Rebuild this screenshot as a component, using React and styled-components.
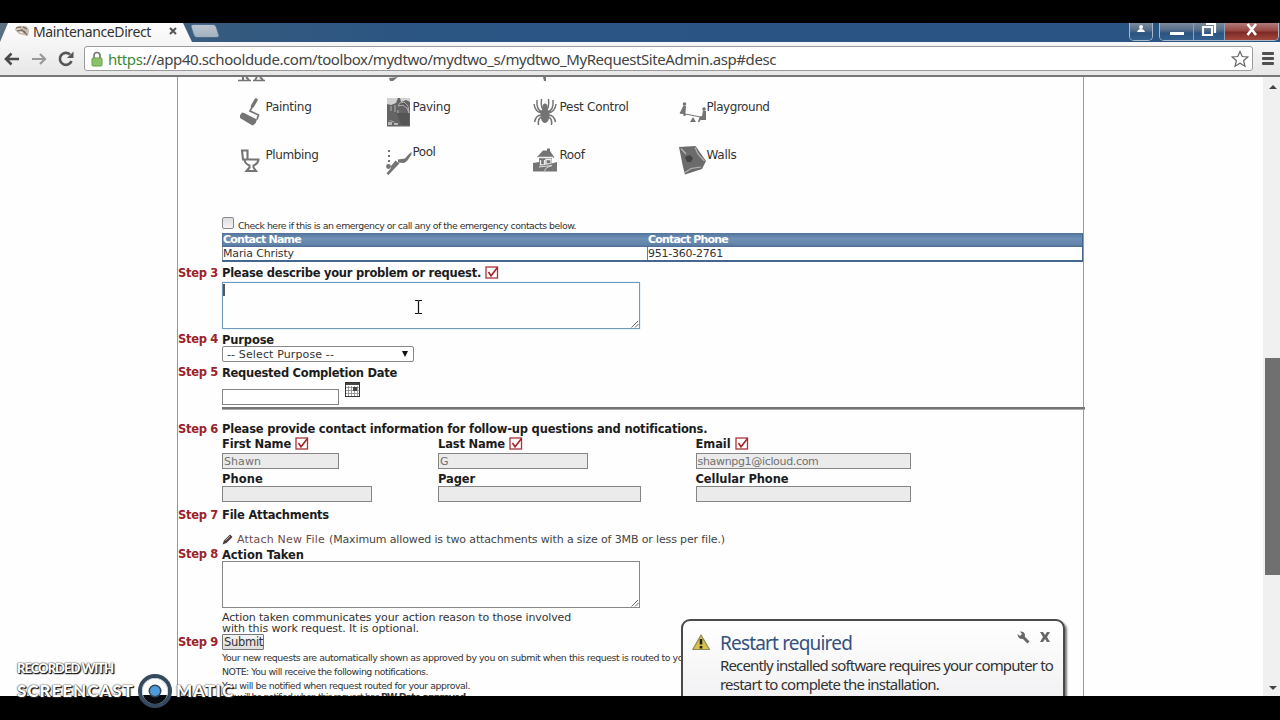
import React, { useLayoutEffect, useRef, useState } from "react";
import styled, { createGlobalStyle } from "styled-components";

const verdana = '"DejaVu Sans", sans-serif';
const segoe = '"Noto Sans", "Open Sans", sans-serif';

const GlobalStyle = createGlobalStyle`
  * { box-sizing: border-box; }
  body { margin: 0; background: #000; overflow: hidden; }
`;

/* ---------- text that is tracked to a given measure ---------- */

const Tracked = styled.span`
  display: inline-block;
  justify-self: start;
  white-space: pre;
`;

function Fit({ w, children }) {
  const ref = useRef(null);
  const [spacing, setSpacing] = useState(0);
  useLayoutEffect(() => {
    const natural = ref.current.getBoundingClientRect().width;
    setSpacing((w - natural) / ref.current.textContent.length);
  }, [w]);
  return (
    <Tracked ref={ref} style={{ letterSpacing: `${spacing}px` }}>
      {children}
    </Tracked>
  );
}

/* ---------- window ---------- */

const Screen = styled.div`
  position: relative;
  width: 1280px;
  height: 720px;
  padding: 23px 0 24px;
  background: #000;
  overflow: hidden;
`;

const Browser = styled.div`
  position: relative;
  display: flex;
  flex-direction: column;
  height: 673px;
  background: #fefefe;
  overflow: hidden;
`;

const TabStrip = styled.div`
  display: flex;
  justify-content: space-between;
  height: 19px;
  background: linear-gradient(90deg, #5c6f82 0, #33597f 240px, #2b5583 420px, #2a5484 100%);
`;

const TabGroup = styled.div`
  display: flex;
`;

const Tab = styled.div`
  display: flex;
  align-items: center;
  width: 192px;
  height: 19px;
  padding: 0 15px 3px 14px;
  background: linear-gradient(#fdfdfd, #f6f6f6);
  clip-path: polygon(8px 0, 183px 0, 192px 100%, 0 100%);
  font: 14px/17px ${segoe};
  color: #333;
`;

const TabTitle = styled.div`
  flex: 1;
  padding-left: 3px;
`;

const NewTab = styled.div`
  width: 24px;
  height: 12px;
  margin: 2px 0 0 1px;
  border-radius: 2px;
  background: linear-gradient(#b9c4cf, #a3b1c0);
  transform: skewX(18deg);
  box-shadow: 0 0 1px #dfe6ee;
`;

const WindowControls = styled.div`
  display: flex;
  height: 18px;
  padding-right: 1px;
`;

const ControlGroup = styled.div`
  display: flex;
  height: 18px;
  margin-left: 6px;
  border: 1px solid #a9bacb;
  border-top: 0;
  border-radius: 0 0 5px 5px;
  overflow: hidden;
`;

const Control = styled.div`
  display: flex;
  justify-content: center;
  align-items: flex-start;
  width: ${(p) => p.$w}px;
  background: ${(p) =>
    p.$close
      ? "linear-gradient(#b07d7a, #9a4742 45%, #7c2a27 55%, #a4483c)"
      : "linear-gradient(#7c8b9a, #566f89 40%, #2c5480 60%, #34608d)"};
  & + & { border-left: 1px solid #8da2b8; }
`;

const Toolbar = styled.div`
  display: flex;
  align-items: center;
  height: 35px;
  padding: 0 5px 0 3px;
  border-bottom: 2px solid #777;
  background: linear-gradient(#f7f7f7, #e6e6e6);
`;

const NavIcons = styled.div`
  display: flex;
  width: 81px;
`;

const AddressBar = styled.div`
  display: flex;
  align-items: center;
  width: 1169px;
  height: 25px;
  padding: 0 3px 0 6px;
  border: 1px solid #9b9b9b;
  border-radius: 3px;
  background: #fff;
`;

const Url = styled.div`
  flex: 1;
  padding-left: 5px;
  font: 15px/22px ${segoe};
  color: #444;
`;

const Scheme = styled.span`
  color: #3d8a35;
`;

const MenuIcon = styled.div`
  display: flex;
  flex-direction: column;
  gap: 2px;
  margin-left: 9px;
`;

const MenuLine = styled.div`
  width: 12px;
  height: 3px;
  border-radius: 1px;
  background: #505050;
`;

/* ---------- page ---------- */

const Viewport = styled.div`
  display: flex;
  flex: 1;
  min-height: 0;
`;

const PageArea = styled.div`
  flex: 1;
  padding-left: 177px;
  background: #fefefe;
`;

const Sheet = styled.div`
  width: 907px;
  height: 619px;
  border: solid #999;
  border-width: 0 1px;
`;

const Scrollbar = styled.div`
  display: flex;
  flex-direction: column;
  align-items: center;
  width: 17px;
  padding: 8px 0 6px;
  background: #f0f0f0;
`;

const Arrow = styled.div`
  width: 0;
  height: 0;
  margin-left: 2px;
  border: solid transparent;
  border-width: ${(p) => (p.$down ? "4px 4px 0" : "0 4px 4px")};
  border-top-color: ${(p) => (p.$down ? "#444" : "transparent")};
  border-bottom-color: ${(p) => (p.$down ? "transparent" : "#444")};
`;

const Track = styled.div`
  flex: 1;
  width: 100%;
  padding: 269px 0 0 2px;
`;

const Thumb = styled.div`
  height: 217px;
  background: #707070;
`;

const Categories = styled.div`
  display: grid;
  grid-template-columns: 147px 147px 147px 147px;
  grid-template-rows: 7px 48px 48px;
  height: 138px;
  padding-left: 60px;
`;

const Category = styled.div`
  display: flex;
  height: ${(p) => (p.$cut ? 5 : 48)}px;
  overflow: ${(p) => (p.$cut ? "hidden" : "visible")};
`;

const CategoryIcon = styled.div`
  width: 27.500px;
  padding-top: 14px;
`;

const CategoryName = styled.div`
  padding-top: ${(p) => 15 - (p.$raise || 0)}px;
  font: 12px/16px ${verdana};
  color: #333;
`;

const Emergency = styled.div`
  display: flex;
  align-items: flex-start;
  height: 18px;
  padding: 2px 0 0 44px;
  font: 9.4px/18px ${verdana};
  color: #333;
`;

const Checkbox = styled.div`
  width: 12px;
  height: 12px;
  margin-right: 4px;
  border: 1px solid #888;
  border-radius: 2px;
  background: linear-gradient(#dedede, #f4f4f4);
`;

const ContactTable = styled.div`
  height: 29px;
  margin-left: 44px;
  border: solid #45668f;
  border-width: 0 1px 2px 0;
  font: 11px/13px ${verdana};
  color: #333;
`;

const ContactRow = styled.div`
  display: grid;
  grid-template-columns: 425px 1fr;
  height: ${(p) => (p.$head ? 14 : 13)}px;
  background: ${(p) => (p.$head ? "linear-gradient(#52749c, #6e90b4 40%, #6384ab 80%, #4c6c94)" : "#fff")};
  border-left: 1px solid ${(p) => (p.$head ? "#52749c" : "#999")};
  color: ${(p) => (p.$head ? "#fff" : "#333")};
  font-weight: ${(p) => (p.$head ? 700 : 400)};
`;

const PhoneCell = styled.div`
  margin-left: -1px;
  border-left: 1px solid ${(p) => (p.$plain ? "transparent" : "#777")};
`;

const Step = styled.section`
  display: grid;
  grid-template-columns: 44px 1fr;
  height: ${(p) => p.$h}px;
`;

const StepNo = styled.div`
  font: 700 11.5px/${(p) => p.$line}px ${verdana};
  color: #9b2329;
`;

const StepBody = styled.div`
  display: flex;
  flex-direction: column;
  align-items: flex-start;
  width: 863px;
`;

const Heading = styled.div`
  display: flex;
  align-items: center;
  height: ${(p) => p.$line}px;
  padding-top: ${({ $drop = 1 }) => Math.max($drop, 0) * 2}px;
  padding-bottom: ${({ $drop = 1 }) => Math.max(-$drop, 0) * 2}px;
  font: 700 11.5px/14px ${verdana};
  color: #1c1c1c;
  gap: 4px;
`;

const TextArea = styled.div`
  display: flex;
  justify-content: space-between;
  align-items: flex-end;
  width: 418px;
  height: 47px;
  padding: 1px 0 0 0;
  border: 1px solid ${(p) => (p.$focus ? "#7298bb" : "#888")};
  box-shadow: ${(p) => (p.$focus ? "0 0 1px #8cbbe6" : "none")};
  background: #fefeff;
`;

const Caret = styled.div`
  align-self: flex-start;
  width: 2px;
  height: 12px;
  background: #555;
`;

const Select = styled.div`
  display: flex;
  justify-content: space-between;
  align-items: center;
  width: 192px;
  height: 16px;
  padding: 1px 5px 0 4px;
  border: 1px solid #888;
  border-radius: 2px;
  background: #fff;
  font: 11px/14px ${verdana};
  color: #333;
`;

const DownMark = styled.div`
  width: 0;
  height: 0;
  margin-bottom: 2px;
  border: solid transparent;
  border-width: 6px 3px 0;
  border-top-color: #111;
`;

const DateRow = styled.div`
  display: flex;
  align-items: flex-start;
  gap: 6px;
  height: 27px;
  padding-top: 2px;
`;

const Field = styled.div`
  width: ${(p) => p.$w}px;
  height: 16px;
  margin-top: ${(p) => p.$top || 0}px;
  padding-left: 1px;
  border: 1px solid #858585;
  background: ${(p) => (p.$open ? "#fff" : "#ebebeb")};
  font: 11px/16px ${verdana};
  color: #707070;
`;

const Divider = styled.div`
  width: 863px;
  height: 3px;
  border-top: 2px solid #757575;
  border-bottom: 1px solid #aaa;
`;

const ContactGrid = styled.div`
  display: grid;
  grid-template-columns: 216px 257.5px 1fr;
  grid-template-rows: 32px 34px;
  padding-top: 1px;
`;

const AttachLine = styled.div`
  display: flex;
  align-items: center;
  height: 16px;
  margin-top: 8px;
  padding-top: 1px;
  gap: 4px;
  font: 11px/16px ${verdana};
  color: #444;
`;

const AttachLink = styled.span`
  color: #6d4a4a;
`;

const Help = styled.div`
  padding-top: 4px;
  font: 11px/11px ${verdana};
  color: #333;
`;

const Submit = styled.div`
  height: 16px;
  width: 42px;
  padding-left: 1px;
  border: 1px solid #777;
  border-radius: 1px;
  background: linear-gradient(#f4f4f4, #dcdcdc);
  font: 11.5px/15px ${verdana};
  color: #333;
`;

const Notes = styled.div`
  padding-top: 1px;
  font: 9.4px/14px ${verdana};
  color: #333;
`;

const LastNote = styled.div`
  margin-top: -2px;
  line-height: 12px;
`;

/* ---------- overlays ---------- */

const Toast = styled.div`
  position: absolute;
  left: 681px;
  top: 596px;
  display: grid;
  grid-template-columns: 28px 1fr auto;
  grid-template-rows: 25px auto;
  width: 384px;
  height: 90px;
  padding: 10px 12px 0 9px;
  border: 2px solid #4a4a4a;
  border-radius: 9px;
  background: linear-gradient(#fff, #f0f0f2);
  box-shadow: 2px 2px 2px rgba(0, 0, 0, 0.5);
  font: 15px/19px ${segoe};
  color: #333;
`;

const ToastTitle = styled.div`
  font: 19px/25px ${segoe};
  color: #35517f;
`;

const ToastText = styled.div`
  grid-column: 2 / 4;
  align-self: start;
`;

const ToastTools = styled.div`
  display: flex;
  gap: 9px;
`;

const PointerMark = styled.div`
  position: absolute;
  left: 414px;
  top: 276px;
  height: 16px;
`;

const Watermark = styled.div`
  position: absolute;
  left: 17px;
  top: 661px;
  font: 900 13px/15px Lato, sans-serif;
  color: #fff;
  text-shadow: 1px 1px 1px #222, 0 0 1px #333, 0 0 2px #555, 1px 1px 1px #111;
`;

const WatermarkRow = styled.div`
  display: flex;
  align-items: center;
  height: 34px;
  margin-top: -2px;
  gap: 4px;
  font-size: 17px;
  line-height: 34px;
`;

/* ---------- drawings ---------- */

const Svg = ({ w, h, children }) => (
  <svg width={w} height={h} viewBox={`0 0 ${w} ${h}`} fill="#747474" display="block">
    {children}
  </svg>
);

const Required = () => (
  <Svg w={15} h={13}>
    <rect x="1" y="1" width="11.5" height="11" fill="#fff" stroke="#a93338" strokeWidth="1.3" />
    <path d="M3.5 6 L6 9.8 L12.500 1.500" fill="none" stroke="#a3262b" strokeWidth="1.6" />
  </Svg>
);

const Grip = () => (
  <Svg w={8} h={8}>
    <path d="M0.5 7.5 L7 1 M4 7.5 L7.5 4" stroke="#666" fill="none" />
  </Svg>
);

const icons = {
  paint: (
    <Svg w={27} h={30}>
      <path d="M18 1.500 L12 13 L20.500 17 L19 21.500" fill="none" stroke="#747474" strokeWidth="1.700" />
      <path d="M18 2 L14.500 8" stroke="#747474" strokeWidth="3.400" strokeLinecap="round" />
      <path d="M4 14.500 Q1.500 17 2 20 L14.500 27.500 Q18 26 19 21.500 L6 15Z" />
    </Svg>
  ),
  plumb: (
    <Svg w={27} h={30}>
      <path d="M4 4.500 H9.500 V13.500 H5 Z M6.500 13.500 H20.500 Q20 18 15.500 19.500 V21.500 L18 25 H8.500 L11.500 21.500 V19.500 Q7 18 6.500 13.500" fill="none" stroke="#747474" strokeWidth="2.100" />
    </Svg>
  ),
  pave: (
    <Svg w={27} h={30}>
      <path d="M2 0h23v28.500H2z" fill="#646464" />
      <path d="M2 0h11l-2 5-5 2-4-1z M15 0h10v4l-4-2-5 2z" fill="#d2d2d2" />
      <path d="M13 8l2-3 4-1 4 4 1 7-2-5-4-3z M6 8v5M10 7v7M13 12v3" stroke="#bbb" strokeWidth=".9" fill="#555" />
      <path d="M3 24h4v3H3zM9 25h4v2H9zM3 22l5 1 2 2" fill="#b8b8b8" />
      <path d="M12 15h12v12H16z" fill="#555" />
    </Svg>
  ),
  pool: (
    <Svg w={27} h={32}>
      <path d="M3 4h2v2H3zM3 9h2v2H3zM3 14h2v2H3z" />
      <circle cx="3.500" cy="20.500" r="2.400" />
      <path d="M13 13.500 L20 12.500 L24 8 L26.500 6 V8.500 L22 15 L19 17 L13 16.500Z" />
      <path d="M6 20 L10.500 14.500 L14.500 17.500 L9.500 22.500 L3.500 29 L1.500 27.500 L6 22Z" />
    </Svg>
  ),
  spider: (
    <Svg w={27} h={30}>
      <ellipse cx="13" cy="17.500" rx="4.500" ry="7.500" />
      <ellipse cx="13" cy="9" rx="2.500" ry="3.500" />
      <path d="M11 14 Q4 13 5 2 M12 12 Q8.500 10 9.500 1 M15 14 Q22 13 21 2 M14 12 Q17.500 10 16.500 1 M10 15 Q3 14 2 6 M16 15 Q23 14 24 6 M11 17 Q4 16 2.500 24 M15 17 Q22 16 23.500 24 M10 19 Q5.500 20 6.500 27 M16 19 Q20.500 20 19.500 27" fill="none" stroke="#747474" strokeWidth="1.500" />
    </Svg>
  ),
  roof: (
    <Svg w={27} h={30}>
      <path d="M5 11 L11 4.500 H15 V2.500 H18 V5 L22.500 11.500 L20 12 V21 H7 V12Z" />
      <path d="M6 11.500 H21 M8.500 14 V19 H12.500 V14 M14 13.500 h5 v4.500 h-5z" fill="none" stroke="#eee" strokeWidth="1.300" />
      <path d="M1 17 L7 16 V20 L16 18.500 L25 16 V25.500 H1Z" />
      <path d="M7 21 L20 19.500 Q12 22 13 25" fill="none" stroke="#ddd" />
    </Svg>
  ),
  play: (
    <Svg w={27} h={30}>
      <circle cx="5.500" cy="6" r="1.800" />
      <circle cx="25" cy="11" r="1.800" />
      <path d="M4.500 7.500 L7 8 L6.500 15 V18 H4.500 V15.500 H0.500Z M24 12.500 L27 13 V22 H21.500 L20.500 24 H19 L20.500 19 L23 18Z M14 19 L17 24 H11Z" />
      <path d="M1 15 L27 20" stroke="#747474" strokeWidth="1" />
    </Svg>
  ),
  walls: (
    <Svg w={27} h={32}>
      <path d="M0 1 L16.500 0 L27 15 L23 23 L6 28.500 L4 21Z" fill="#6b6b6b" />
      <path d="M16 1.500 L19 8 L25.500 15 M6 26.500 L12 22.500 L22 21 M2 2.500 L7 8" fill="none" stroke="#b5b5b5" strokeWidth="1.200" />
      <path d="M6 11 L11 9 L14 12 L12 16 L8 16Z" fill="#454545" />
    </Svg>
  ),
};

const Cat = ({ icon, w, name, raise }) => (
  <Category>
    <CategoryIcon>{icons[icon]}</CategoryIcon>
    <CategoryName $raise={raise}>
      <Fit w={w}>{name}</Fit>
    </CategoryName>
  </Category>
);

const Labeled = ({ w, label, required, drop, line, children }) => (
  <div>
    <Heading $line={line} $drop={drop}>
      <Fit w={w}>{label}</Fit>
      {required && <Required />}
    </Heading>
    {children}
  </div>
);

export default function App() {
  return (
    <Screen>
      <GlobalStyle />
      <Browser>
        <TabStrip>
          <TabGroup>
            <Tab>
              <Svg w={16} h={14}>
                <path d="M1 6 Q2 1 8 2 Q14 1 15 7 L14 12 L9 11 L5 10Z" fill="#c9bbae" />
                <path d="M2 4 L7 3 M9 3 l4 2 M3 7 l5 -1 3 3 M10 7 l3 4" stroke="#77655b" strokeWidth="1.2" fill="none" />
                <path d="M3 5 l3 0 M6 8 l3 1" stroke="#eee" />
              </Svg>
              <TabTitle><Fit w={118}>MaintenanceDirect</Fit></TabTitle>
              <Svg w={8} h={8}><path d="M1 1 L7 7 M7 1 L1 7" stroke="#555" strokeWidth="2" /></Svg>
            </Tab>
            <NewTab />
          </TabGroup>
          <WindowControls>
            <ControlGroup>
              <Control $w={22}>
                <Svg w={12} h={12}><circle cx="6" cy="4" r="2" fill="#fff" /><path d="M2 9 Q3 6 6 6 Q9 6 10 9Z" fill="#fff" /></Svg>
              </Control>
            </ControlGroup>
            <ControlGroup>
              <Control $w={33}><Svg w={16} h={14}><rect x="1" y="9" width="14" height="3" fill="#fff" /></Svg></Control>
              <Control $w={31}>
                <Svg w={16} h={14}><path d="M2 4 H11 V12 H2Z M5 1 H14 V10" fill="none" stroke="#fff" strokeWidth="2.200" /></Svg>
              </Control>
              <Control $w={54} $close>
                <Svg w={14} h={14}><path d="M2.500 1 L11 12 M11 1 L2.500 12" stroke="#fff" strokeWidth="2.600" /></Svg>
              </Control>
            </ControlGroup>
          </WindowControls>
        </TabStrip>

        <Toolbar>
          <NavIcons>
            <Svg w={27} h={18}><path d="M16 9 H3 M8.500 3.500 L3 9 L8.500 14.500" fill="none" stroke="#4a4a4a" strokeWidth="2.600" /></Svg>
            <Svg w={27} h={18}><path d="M2 9 H15 M10 4 L15 9 L10 14" fill="none" stroke="#999" strokeWidth="2.200" /></Svg>
            <Svg w={18} h={18}>
              <path d="M14.500 11 A6 6 0 1 1 13 4.500" fill="none" stroke="#555" strokeWidth="2.600" />
              <path d="M16.500 1.500 V8 H10Z" fill="#555" />
            </Svg>
          </NavIcons>
          <AddressBar>
            <Svg w={12} h={16}>
              <path d="M3 8 V4.500 Q3 1.500 6 1.500 Q9 1.500 9 4.500 V8" fill="none" stroke="#777" strokeWidth="1.700" />
              <rect x="1" y="7" width="10" height="8" rx="1" fill="#8cc36a" stroke="#679e47" />
            </Svg>
            <Url>
              <Fit w={668}>
                <Scheme>https</Scheme>://app40.schooldude.com/toolbox/mydtwo/mydtwo_s/mydtwo_MyRequestSiteAdmin.asp#desc
              </Fit>
            </Url>
            <Svg w={18} h={18}>
              <path d="M9 1.500 L11.200 6.500 L16.800 7 L12.600 10.700 L14 16.300 L9 13.300 L4 16.300 L5.400 10.700 L1.200 7 L6.800 6.500Z" fill="#fff" stroke="#666" strokeWidth="1.200" />
            </Svg>
          </AddressBar>
          <MenuIcon><MenuLine /><MenuLine /><MenuLine /></MenuIcon>
        </Toolbar>

        <Viewport>
          <PageArea>
            <Sheet>
              <Categories>
                <Category $cut>
                  <Svg w={27} h={5}><path d="M0 3.500 H13 M15 3.500 H27" stroke="#747474" strokeWidth="1.500" /><path d="M5 0 V3 M8 0 L11 3 M19 0 L17 3 M22 0 L25 3" stroke="#747474" strokeWidth="2" /></Svg>
                </Category>
                <Category $cut><Svg w={27} h={5}><path d="M4 1 L13 0 L8 4 L5 4Z" /></Svg></Category>
                <Category $cut><Svg w={27} h={5}><path d="M11 0 H14 V4 H12Z" /></Svg></Category>
                <Category $cut />
                <Cat icon="paint" w={46} name="Painting" />
                <Cat icon="pave" w={38} name="Paving" />
                <Cat icon="spider" w={69} name="Pest Control" />
                <Cat icon="play" w={63} name="Playground" />
                <Cat icon="plumb" w={53} name="Plumbing" />
                <Cat icon="pool" w={23} name="Pool" raise={3} />
                <Cat icon="roof" w={25} name="Roof" />
                <Cat icon="walls" w={30} name="Walls" />
              </Categories>

              <Emergency>
                <Checkbox />
                <Fit w={338}>Check here if this is an emergency or call any of the emergency contacts below.</Fit>
              </Emergency>
              <ContactTable>
                <ContactRow $head>
                  <Fit w={78}>Contact Name</Fit>
                  <PhoneCell $plain><Fit w={80}>Contact Phone</Fit></PhoneCell>
                </ContactRow>
                <ContactRow>
                  <Fit w={71}>Maria Christy</Fit>
                  <PhoneCell><Fit w={75}>951-360-2761</Fit></PhoneCell>
                </ContactRow>
              </ContactTable>

              <Step $h={70}>
                <StepNo $line={22}><Fit w={40}>Step 3</Fit></StepNo>
                <StepBody>
                  <Heading $line={20} $drop={0.5}><Fit w={259}>Please describe your problem or request.</Fit><Required /></Heading>
                  <TextArea $focus><Caret /><Grip /></TextArea>
                </StepBody>
              </Step>

              <Step $h={32}>
                <StepNo $line={15}><Fit w={40}>Step 4</Fit></StepNo>
                <StepBody>
                  <Heading $line={14} $drop={0.5}><Fit w={52}>Purpose</Fit></Heading>
                  <Select><Fit w={107}>-- Select Purpose --</Fit><DownMark /></Select>
                </StepBody>
              </Step>

              <Step $h={57}>
                <StepNo $line={17}><Fit w={40}>Step 5</Fit></StepNo>
                <StepBody>
                  <Heading $line={16} $drop={0.5}><Fit w={175}>Requested Completion Date</Fit></Heading>
                  <DateRow>
                    <Field $w={117} $open $top={7} />
                    <Svg w={15} h={15}>
                      <rect x=".5" y=".5" width="14" height="14" fill="#fff" stroke="#333" />
                      <path d="M1 2 H14" stroke="#444" strokeWidth="2" />
                      <path d="M3.500 4 V14 M6.500 4 V14 M9.500 4 V14 M12.500 4 V14 M1 5.500 H14 M1 8.500 H14 M1 11.500 H14" stroke="#888" strokeWidth=".8" />
                      <rect x="8" y="5" width="4" height="4" fill="#444" />
                    </Svg>
                  </DateRow>
                  <Divider />
                </StepBody>
              </Step>

              <Step $h={86}>
                <StepNo $line={16}><Fit w={40}>Step 6</Fit></StepNo>
                <StepBody>
                  <Heading $line={14}><Fit w={485}>Please provide contact information for follow-up questions and notifications.</Fit></Heading>
                  <ContactGrid>
                    <Labeled w={69} label="First Name" required line={17} drop={-1}><Field $w={117}><Fit w={37}>Shawn</Fit></Field></Labeled>
                    <Labeled w={67} label="Last Name" required line={17} drop={-1}><Field $w={150}>G</Field></Labeled>
                    <Labeled w={35} label="Email" required line={17} drop={-1}><Field $w={215}><Fit w={121}>shawnpg1@icloud.com</Fit></Field></Labeled>
                    <Labeled w={41} label="Phone" line={18} drop={2}><Field $w={150} /></Labeled>
                    <Labeled w={37} label="Pager" line={18} drop={2}><Field $w={203} /></Labeled>
                    <Labeled w={93} label="Cellular Phone" line={18} drop={2}><Field $w={215} /></Labeled>
                  </ContactGrid>
                </StepBody>
              </Step>

              <Step $h={40}>
                <StepNo $line={16}><Fit w={40}>Step 7</Fit></StepNo>
                <StepBody>
                  <Heading $line={16} $drop={0}><Fit w={107}>File Attachments</Fit></Heading>
                  <AttachLine>
                    <Svg w={11} h={11}>
                      <path d="M0.500 10.500 L2 6.500 L8 0.500 L10.500 3 L4.500 9Z" fill="#4b3a3a" />
                      <path d="M3.500 6.500 L8 2.200" stroke="#c9a9a9" />
                    </Svg>
                    <Fit w={88}><AttachLink>Attach New File</AttachLink></Fit>
                    <Fit w={396}>(Maximum allowed is two attachments with a size of 3MB or less per file.)</Fit>
                  </AttachLine>
                </StepBody>
              </Step>

              <Step $h={87}>
                <StepNo $line={15}><Fit w={40}>Step 8</Fit></StepNo>
                <StepBody>
                  <Heading $line={14} $drop={0.5}><Fit w={82}>Action Taken</Fit></Heading>
                  <TextArea><span /><Grip /></TextArea>
                  <Help>
                    <Fit w={349}>Action taken communicates your action reason to those involved</Fit>
                    <br />
                    <Fit w={197}>with this work request. It is optional.</Fit>
                  </Help>
                </StepBody>
              </Step>

              <Step $h={62}>
                <StepNo $line={16}><Fit w={40}>Step 9</Fit></StepNo>
                <StepBody>
                  <Submit><Fit w={39}>Submit</Fit></Submit>
                  <Notes>
                    <div><Fit w={469}>Your new requests are automatically shown as approved by you on submit when this request is routed to you.</Fit></div>
                    <div><Fit w={206}>NOTE: You will receive the following notifications.</Fit></div>
                    <div><Fit w={248}>You will be notified when request routed for your approval.</Fit></div>
                    <LastNote><Fit w={246}>You will be notified when this request has <b>PW Date approved.</b></Fit></LastNote>
                  </Notes>
                </StepBody>
              </Step>
            </Sheet>
          </PageArea>
          <Scrollbar>
            <Arrow />
            <Track><Thumb /></Track>
            <Arrow $down />
          </Scrollbar>
        </Viewport>

        <PointerMark>
          <Svg w={9} h={16}><path d="M1 1.500 H3.500 L4.500 2 L5.500 1.500 H8 M4.500 2 V14 M1 14.500 H3.500 L4.500 14 L5.500 14.500 H8" fill="none" stroke="#111" strokeWidth="1.200" /></Svg>
        </PointerMark>

        <Toast>
          <Svg w={20} h={26}>
            <path d="M9 4 L17.500 18.500 H0.800Z" fill="#d8c04a" stroke="#8b8a5e" strokeWidth="1.200" strokeLinejoin="round" />
            <path d="M9 8 V13.500 M9 15 V17.500" stroke="#222" strokeWidth="2.600" />
          </Svg>
          <ToastTitle><Fit w={132}>Restart required</Fit></ToastTitle>
          <ToastTools>
            <Svg w={13} h={13}>
              <path d="M5 5 L11.500 11.500" stroke="#666" strokeWidth="3" />
              <path d="M0.500 3 L3 5 L5 3 L3 0.500 Q7 0 8 3.500 Q8 7 5 8 Q1 8 0.500 3Z" fill="#666" />
            </Svg>
            <Svg w={12} h={13}><path d="M1 1 H4 L6 4 L8 1 H11 L8 6 L11 11 H8 L6 8 L4 11 H1 L4 6Z" fill="#666" /></Svg>
          </ToastTools>
          <ToastText>
            <Fit w={333}>Recently installed software requires your computer to</Fit>
            <br />
            <Fit w={219}>restart to complete the installation.</Fit>
          </ToastText>
        </Toast>
      </Browser>

      <Watermark>
        <Fit w={96}>RECORDED WITH</Fit>
        <WatermarkRow>
          <Fit w={117}>SCREENCAST</Fit>
          <Svg w={34} h={36}>
            <circle cx="17" cy="18" r="15" fill="none" stroke="#34495d" strokeWidth="4" />
            <circle cx="17" cy="18" r="12.500" fill="none" stroke="#b8c6d2" strokeWidth="1.200" />
            <path d="M5 22 A12.500 12.500 0 0 0 29 22Z" fill="#080b10" />
            <path d="M5 22 A12.500 12.500 0 1 1 29 22Z" fill="#fff" />
            <circle cx="17" cy="18" r="6.500" fill="#345" />
            <circle cx="17" cy="18" r="5" fill="#4d9bd8" />
          </Svg>
          <Fit w={58}>MATIC</Fit>
        </WatermarkRow>
      </Watermark>
    </Screen>
  );
}
